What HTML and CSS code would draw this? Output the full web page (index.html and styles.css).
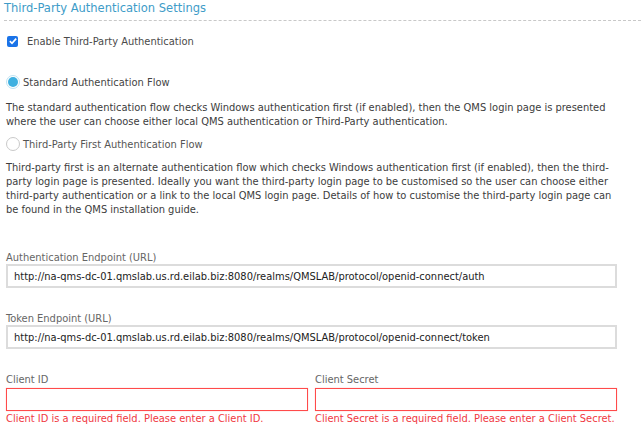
FILE: index.html
```html
<!DOCTYPE html>
<html>
<head>
<meta charset="utf-8">
<link rel="stylesheet" href="styles.css">
</head>
<body>
<div class="page">
  <h2 class="title">Third-Party Authentication Settings</h2>
  <div class="check-row">
    <span class="checkbox"><svg viewBox="0 0 12 12" width="10" height="10"><path d="M2.2 6.2 L4.8 8.7 L9.8 3.2" fill="none" stroke="#fff" stroke-width="2"/></svg></span>
    <span class="check-label">Enable Third-Party Authentication</span>
  </div>
  <div class="radio-row first">
    <span class="radio on"></span>
    <span class="radio-label">Standard Authentication Flow</span>
  </div>
  <p class="desc">The standard authentication flow checks Windows authentication first (if enabled), then the QMS login page is presented where the user can choose either local QMS authentication or Third-Party authentication.</p>
  <div class="radio-row">
    <span class="radio"></span>
    <span class="radio-label muted">Third-Party First Authentication Flow</span>
  </div>
  <p class="desc second">Third-party first is an alternate authentication flow which checks Windows authentication first (if enabled), then the third-party login page is presented. Ideally you want the third-party login page to be customised so the user can choose either third-party authentication or a link to the local QMS login page. Details of how to customise the third-party login page can be found in the QMS installation guide.</p>
  <div class="field first-field">
    <label class="label">Authentication Endpoint (URL)</label>
    <div class="input">http://na-qms-dc-01.qmslab.us.rd.eilab.biz:8080/realms/QMSLAB/protocol/openid-connect/auth</div>
  </div>
  <div class="field">
    <label class="label">Token Endpoint (URL)</label>
    <div class="input">http://na-qms-dc-01.qmslab.us.rd.eilab.biz:8080/realms/QMSLAB/protocol/openid-connect/token</div>
  </div>
  <div class="pair">
    <div class="field col">
      <label class="label gap">Client ID</label>
      <div class="input error"></div>
      <div class="err">Client ID is a required field. Please enter a Client ID.</div>
    </div>
    <div class="field col">
      <label class="label gap">Client Secret</label>
      <div class="input error"></div>
      <div class="err">Client Secret is a required field. Please enter a Client Secret.</div>
    </div>
  </div>
</div>
</body>
</html>
```
FILE: styles.css
```css
* { box-sizing: border-box; }
html, body { margin: 0; padding: 0; background: #fff; }
body {
  font-family: "DejaVu Sans Condensed", "DejaVu Sans", sans-serif;
  font-size: 11px;
  color: #3c3c3c;
}
.page { padding: 0 24px 0 6px; width: 641px; }
.title {
  margin: 0 -24px 0 -2px;
  font-weight: normal;
  font-size: 12.8px;
  line-height: 15px;
  color: #3e9cc8;
  padding-bottom: 5px;
  border-bottom: 1px dashed #c8c8c8;
}
.check-row { display: flex; align-items: center; margin-top: 14px; height: 12px; }
.checkbox {
  width: 11px; height: 11px; border-radius: 2px; background: #1a73e8;
  display: flex; align-items: center; justify-content: center; margin-left: 1px;
}
.check-label { margin-left: 9px; color: #4a4a4a; }
.radio-row { display: flex; align-items: center; height: 14px; margin-top: 8px; }
.radio-row.first { margin-top: 28px; }
.radio {
  width: 14px; height: 14px; border-radius: 50%; border: 1px solid #c9c9c9; background: #fff;
  flex: none; position: relative;
}
.radio.on { border-color: #bfe3f2; }
.radio.on::after {
  content: ""; position: absolute; left: 1px; top: 1px; width: 10px; height: 10px;
  border-radius: 50%; background: #3eb0e0;
}
.radio-label { margin-left: 3px; color: #444; }
.radio-label.muted { color: #555; }
.desc { margin: 12px -3px 0 0; line-height: 14px; }
.desc.second { margin-top: 10px; }
.field { display: flex; flex-direction: column; }
.first-field { margin-top: 34px; }
.field + .field { margin-top: 24px; }
.pair { margin-top: 24px; display: flex; gap: 7px; }
.pair .field + .field { margin-top: 0; }
.label { color: #666; line-height: 13px; margin-bottom: 0; }
.label.gap { margin-bottom: 2px; }
.input {
  height: 24px; border: 2px solid #dcdcdc; padding: 0 6px; display: flex; align-items: center;
  color: #222; white-space: nowrap; overflow: hidden;
}
.input.error { border: 1px solid #ff4b4b; box-shadow: 0 0 1px #ffb3b3; height: 23px; }
.col { flex: 1; }
.err { color: #f0393f; line-height: 13px; margin-top: 1px; }
```
